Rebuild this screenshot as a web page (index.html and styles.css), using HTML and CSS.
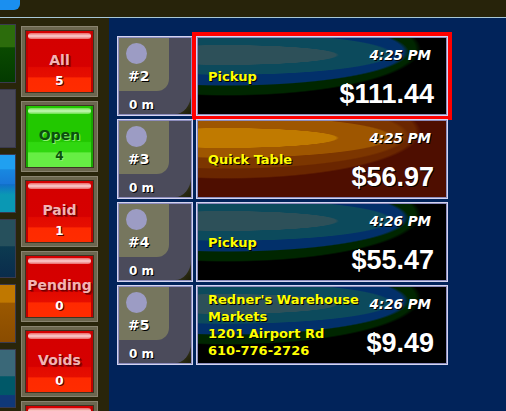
FILE: index.html
```html
<!DOCTYPE html>
<html>
<head>
<meta charset="utf-8">
<link rel="stylesheet" href="styles.css">
</head>
<body>
<div class="app">
  <div class="topbar"><div class="topbtn"></div></div>
  <div class="main">
    <aside class="side">
      <div class="tiles">
        <div class="tile t-green"></div>
        <div class="tile t-gray"></div>
        <div class="tile t-blue"></div>
        <div class="tile t-dark"></div>
        <div class="tile t-orange"></div>
        <div class="tile t-teal"></div>
      </div>
      <div class="filters">
        <div class="filter red"><div class="face"><div class="shine"></div><div class="label">All</div><div class="count">5</div></div></div>
        <div class="filter green"><div class="face"><div class="shine"></div><div class="label">Open</div><div class="count">4</div></div></div>
        <div class="filter red"><div class="face"><div class="shine"></div><div class="label">Paid</div><div class="count">1</div></div></div>
        <div class="filter red"><div class="face"><div class="shine"></div><div class="label">Pending</div><div class="count">0</div></div></div>
        <div class="filter red"><div class="face"><div class="shine"></div><div class="label">Voids</div><div class="count">0</div></div></div>
        <div class="filter red"><div class="face"><div class="shine"></div><div class="label"></div><div class="count"></div></div></div>
      </div>
    </aside>
    <section class="orders">
      <div class="row">
        <div class="ticket"><div class="tface"><div class="dot"></div><div class="num">#2</div><div class="mins">0 m</div></div></div>
        <div class="card blue selected">
          <div class="name">Pickup</div>
          <div class="meta"><div class="time">4:25 PM</div><div class="amount">$111.44</div></div>
        </div>
      </div>
      <div class="row">
        <div class="ticket"><div class="tface"><div class="dot"></div><div class="num">#3</div><div class="mins">0 m</div></div></div>
        <div class="card orange">
          <div class="name">Quick Table</div>
          <div class="meta"><div class="time">4:25 PM</div><div class="amount">$56.97</div></div>
        </div>
      </div>
      <div class="row">
        <div class="ticket"><div class="tface"><div class="dot"></div><div class="num">#4</div><div class="mins">0 m</div></div></div>
        <div class="card blue">
          <div class="name">Pickup</div>
          <div class="meta"><div class="time">4:26 PM</div><div class="amount">$55.47</div></div>
        </div>
      </div>
      <div class="row">
        <div class="ticket"><div class="tface"><div class="dot"></div><div class="num">#5</div><div class="mins">0 m</div></div></div>
        <div class="card blue">
          <div class="name">Redner's Warehouse Markets<br>1201 Airport Rd<br>610-776-2726</div>
          <div class="meta"><div class="time">4:26 PM</div><div class="amount">$9.49</div></div>
        </div>
      </div>
    </section>
  </div>
</div>
</body>
</html>
```
FILE: styles.css
```css
* { box-sizing: border-box; }
html, body { margin: 0; padding: 0; }
body {
  width: 506px;
  height: 411px;
  overflow: hidden;
  background: #28240a;
  font-family: "DejaVu Sans", Verdana, sans-serif;
}
.app {
  width: 506px;
  height: 411px;
  display: flex;
  flex-direction: column;
}
.topbar {
  height: 18px;
  flex: none;
  background: #27230a;
  border-bottom: 1px solid #a8c8d8;
}
.topbtn {
  width: 20px;
  height: 10px;
  background: #1a8ff0;
  border-bottom-right-radius: 6px;
}
.main {
  flex: 1;
  display: flex;
  overflow: hidden;
}

/* left side */
.side {
  width: 109px;
  flex: none;
  display: flex;
  background: #29250a;
  overflow: hidden;
}
.tiles {
  width: 16px;
  flex: none;
  padding-top: 6px;
  display: flex;
  flex-direction: column;
  gap: 6px;
}
.tile {
  height: 59px;
  flex: none;
  border: 1px solid #3a3a4e;
  border-left: none;
}
.t-green { background: linear-gradient(#2c6c0c 0, #2c6c0c 38%, #0a4a00 40%, #033a00 100%); }
.t-gray { background: #4a4a58; }
.t-blue { background: linear-gradient(#20a0f0 0, #20a0f0 24%, #1888e0 26%, #1878d8 50%, #1070c8 52%, #0a98b4 70%, #0a98b4 100%); }
.t-dark { background: linear-gradient(#26505c 0, #26505c 45%, #0c3a50 47%, #0a2c4c 100%); }
.t-orange { background: linear-gradient(#c07800 0, #c07800 30%, #9a5800 32%, #8a4c00 100%); }
.t-teal { background: linear-gradient(#3a6878 0, #3a6878 45%, #005868 47%, #005868 78%, #103878 80%); }

.filters {
  width: 77px;
  flex: none;
  margin-left: 5px;
  padding-top: 8px;
  display: flex;
  flex-direction: column;
  gap: 4px;
}
.filter {
  height: 71px;
  flex: none;
  border: 1px solid #8a8470;
  background: #6b664e;
  padding: 3px;
}
.face {
  height: 100%;
  border: 1px solid #3c3422;
  display: flex;
  flex-direction: column;
  align-items: center;
}
.red .face {
  background: linear-gradient(#d40000 0, #d60000 58%, #e20a00 60%, #e60e00 75%, #ff2a00 77%, #ff2c00 100%);
  box-shadow: inset 2px 0 0 #c00000, inset -2px 0 0 #c00000;
}
.green .face {
  background: linear-gradient(#22c800 0, #22c800 58%, #30d810 60%, #30d810 75%, #66ee44 77%, #66ee44 100%);
  box-shadow: inset 2px 0 0 #18a800, inset -2px 0 0 #18a800;
}
.shine {
  align-self: stretch;
  height: 6px;
  margin: 2px 2px 0;
  border-radius: 3px;
}
.red .shine { background: linear-gradient(#e86a6a, #fbd0d0 50%, #e86a6a); }
.green .shine { background: linear-gradient(#6ae04a, #c8f8b8 50%, #6ae04a); }
.label {
  margin-top: 13px;
  font-weight: bold;
  font-size: 14px;
  line-height: 16px;
  height: 16px;
  white-space: nowrap;
}
.count {
  margin-top: 6px;
  font-weight: bold;
  font-size: 12px;
  line-height: 14px;
  height: 14px;
}
.red .label { color: #f2b4b4; text-shadow: 1px 1px 0 #700000, 2px 2px 0 #a00000; }
.red .count { color: #ffffff; text-shadow: 1px 1px 0 #500000; }
.green .label, .green .count { color: #0c500c; text-shadow: 1px 1px 0 #8af070; }

/* orders */
.orders {
  flex: 1;
  background: #01235a;
  padding: 18px 0 0 8px;
  display: flex;
  flex-direction: column;
  gap: 3px;
  overflow: hidden;
}
.row {
  display: flex;
  gap: 3px;
  height: 80px;
  flex: none;
}
.ticket {
  width: 76px;
  flex: none;
  border: 1px solid #d4d4f0;
  box-shadow: inset 0 0 0 1px #8c8cbc;
  padding: 1px;
  background: radial-gradient(circle at 100% 100%, #1c1c06 0, #2a2a12 10px, #3c3c2c 20px, #3c3c2c 100%);
}
.tface {
  position: relative;
  z-index: 0;
  height: 100%;
  background: #4b4b5b;
  border-bottom-right-radius: 16px 20px;
  display: flex;
  flex-direction: column;
  padding: 5px 0 2px 7px;
}
.tface::before {
  content: "";
  position: absolute;
  z-index: -1;
  left: 0;
  top: 0;
  width: 50px;
  height: 53px;
  background: #76765e;
  border-bottom-right-radius: 12px;
}
.dot {
  width: 21px;
  height: 21px;
  border-radius: 50%;
  background: #9c9cc4;
}
.num {
  margin-top: 4px;
  padding-left: 2px;
  font-weight: bold;
  font-size: 14px;
  line-height: 16px;
  color: #ffffff;
  text-shadow: 1px 1px 0 #000;
}
.mins {
  margin-top: auto;
  padding-left: 3px;
  font-weight: bold;
  font-size: 12px;
  line-height: 14px;
  color: #ffffff;
  text-shadow: 1px 1px 0 #000;
}
.card {
  width: 252px;
  flex: none;
  border: 1px solid #d4d4f0;
  box-shadow: inset 0 0 0 1px #8c8cbc;
  display: flex;
  padding: 0 13px 0 11px;
  background:
    radial-gradient(ellipse 112px 10px at 30px 18px, var(--c1) 97%, transparent 100%),
    radial-gradient(ellipse 166px 21px at 30px 17px, var(--c2) 97%, transparent 100%),
    radial-gradient(ellipse 182px 34px at 30px 15px, var(--c3) 97%, transparent 100%),
    radial-gradient(ellipse 194px 47px at 30px 12px, var(--c4) 97%, transparent 100%),
    var(--c5);
}
.card.blue { --c1: #2d5059; --c2: #0c4a5c; --c3: #02306a; --c4: #002600; --c5: #000000; }
.card.orange { --c1: #c07a00; --c2: #9e5600; --c3: #7c3600; --c4: #6a2600; --c5: #4e0e00; }
.card.selected {
  outline: 4px solid #ff0000;
  outline-offset: 0;
}
.name {
  flex: 1;
  align-self: center;
  font-weight: bold;
  font-size: 13px;
  line-height: 17px;
  color: #ffff00;
  text-shadow: 1px 1px 0 #000;
}
.meta {
  flex: none;
  display: flex;
  flex-direction: column;
  justify-content: space-between;
  align-items: flex-end;
  padding: 10px 0 7px;
}
.time {
  margin-right: 3px;
  font-weight: bold;
  font-style: italic;
  font-size: 13.5px;
  line-height: 16px;
  color: #ffffff;
  text-shadow: 1px 1px 0 #000;
  white-space: nowrap;
}
.amount {
  font-family: "Liberation Sans", Arial, sans-serif;
  font-weight: bold;
  font-size: 27px;
  line-height: 27px;
  color: #ffffff;
  text-shadow: 1px 1px 0 #000;
  white-space: nowrap;
}
```
